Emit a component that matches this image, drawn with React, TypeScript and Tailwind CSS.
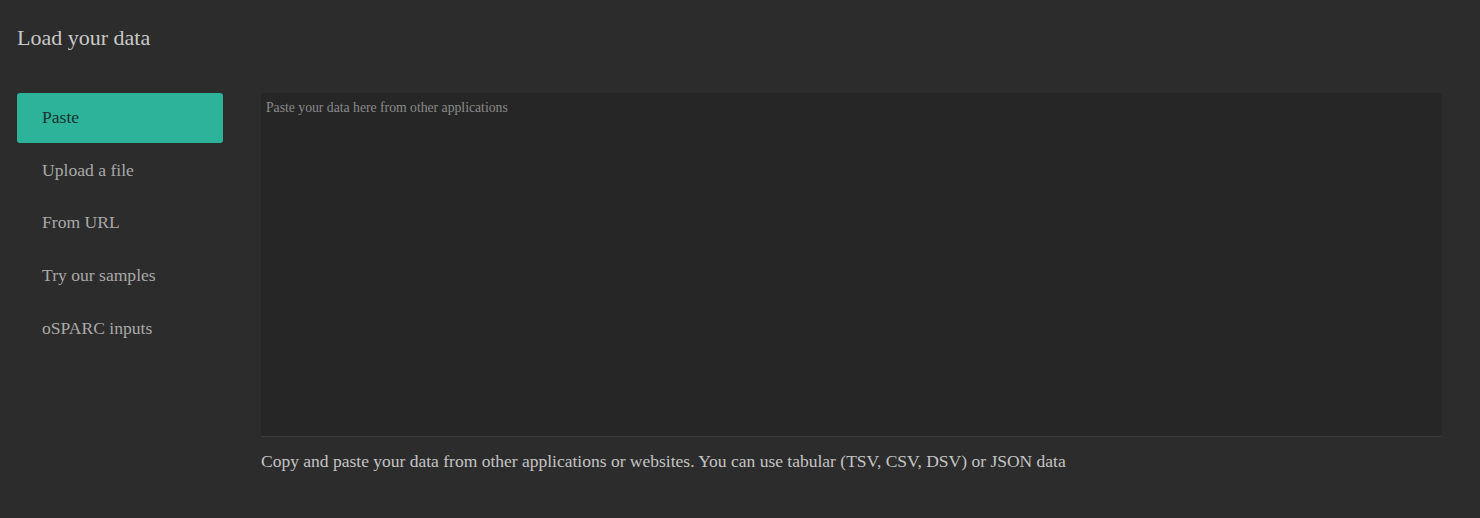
import { useState } from "react";

const sources = ["Paste", "Upload a file", "From URL", "Try our samples", "oSPARC inputs"];

const App = () => {
  const [active, setActive] = useState("Paste");

  return (
    <div
      className="min-h-[518px] w-full bg-[#2c2c2c] px-[17px] pt-[24px]"
      style={{ fontFamily: '"Liberation Serif", "Times New Roman", serif' }}
    >
      <h1 className="h-[28px] text-[22px] leading-[28px] text-[#c9c9c9]">Load your data</h1>

      <div className="mt-[41px] flex gap-[38px] pr-[21px]">
        <nav className="flex w-[206px] shrink-0 flex-col gap-[2.6px]">
          {sources.map((s) => (
            <button
              key={s}
              onClick={() => setActive(s)}
              className={
                s === active
                  ? "flex h-[50px] items-center rounded-[3px] bg-[#2eb39b] pb-[1px] pl-[25px] text-left text-[17.6px] text-[#14322c]"
                  : "flex h-[50px] items-center rounded-[3px] pb-[1px] pl-[25px] text-left text-[17.6px] text-[#a9a9a9]"
              }
            >
              {s}
            </button>
          ))}
        </nav>

        <div className="flex min-w-0 flex-1 flex-col">
          <textarea
            placeholder="Paste your data here from other applications"
            className="h-[344px] w-full resize-none rounded-[2px] border-b border-[#3d3d3d] bg-[#262626] px-[5px] py-[7px] text-[13.7px] leading-[16px] text-[#cfcfcf] outline-none placeholder:text-[#8a8a8a]"
          />
          <p className="mt-[13px] text-[17.5px] leading-[22px] text-[#c4c4c4]">
            Copy and paste your data from other applications or websites. You can use tabular (TSV, CSV, DSV) or JSON data
          </p>
        </div>
      </div>
    </div>
  );
};

export default App;
